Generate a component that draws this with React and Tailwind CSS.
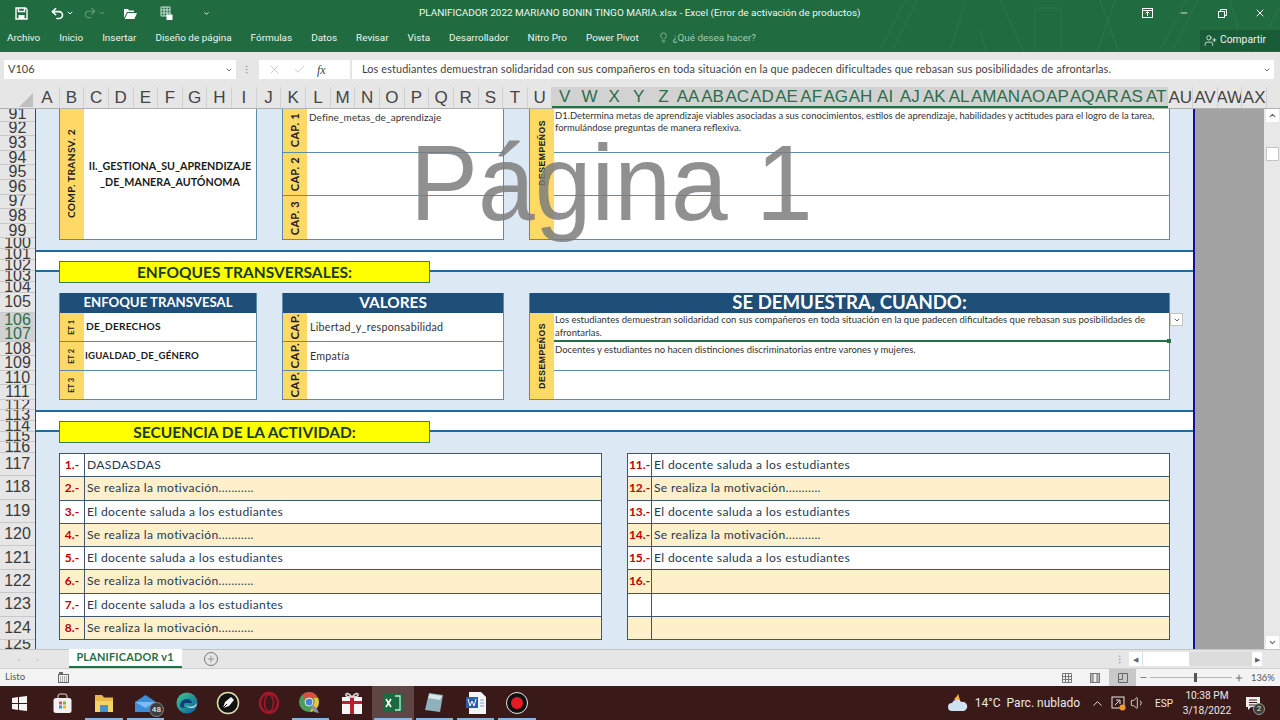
import { ChevronDown, ChevronUp, Lightbulb, UserPlus, Plus, Minus, X, Check, Undo2, Redo2, Volume1, MoreVertical } from 'lucide-react';

const ui = 'font-["Roboto",sans-serif]';
const cell = 'font-["Lato",sans-serif]';

const menu = ['Inicio', 'Insertar', 'Diseño de página', 'Fórmulas', 'Datos', 'Revisar', 'Vista', 'Desarrollador', 'Nitro Pro', 'Power Pivot'];

const columns = ['A','B','C','D','E','F','G','H','I','J','K','L','M','N','O','P','Q','R','S','T','U','V','W','X','Y','Z','AA','AB','AC','AD','AE','AF','AG','AH','AI','AJ','AK','AL','AM','AN','AO','AP','AQ','AR','AS','AT','AU','AV','AW','AX'];

const rowGroups = [
  { from: 91, to: 99, height: 'h-[14.6px]' },
  { from: 100, to: 104, height: 'h-[10.9px]' },
  { from: 105, to: 105, height: 'h-[20px]' },
  { from: 106, to: 111, height: 'h-[14.5px]' },
  { from: 112, to: 116, height: 'h-[10.6px]' },
  { from: 117, to: 124, height: 'h-[23.4px]' },
  { from: 125, to: 125, height: 'h-[10px]' },
];

const leftSteps = [
  ['1.-', 'DASDASDAS'],
  ['2.-', 'Se realiza la motivación...........'],
  ['3.-', 'El docente saluda a los estudiantes'],
  ['4.-', 'Se realiza la motivación...........'],
  ['5.-', 'El docente saluda a los estudiantes'],
  ['6.-', 'Se realiza la motivación...........'],
  ['7.-', 'El docente saluda a los estudiantes'],
  ['8.-', 'Se realiza la motivación...........'],
];

const rightSteps = [
  ['11.-', 'El docente saluda a los estudiantes'],
  ['12.-', 'Se realiza la motivación...........'],
  ['13.-', 'El docente saluda a los estudiantes'],
  ['14.-', 'Se realiza la motivación...........'],
  ['15.-', 'El docente saluda a los estudiantes'],
  ['16.-', ''],
  ['', ''],
  ['', ''],
];

const Vertical = ({ className, children }) => (
  <span className={`[writing-mode:vertical-rl] rotate-180 whitespace-nowrap ${className}`}>{children}</span>
);

const Tag = ({ children, className = '' }) => (
  <div className={`w-[24px] shrink-0 bg-[#ffd966] flex items-center justify-center overflow-hidden ${className}`}>{children}</div>
);

const SectionTitle = ({ title }) => (
  <div className="relative h-[43px] shrink-0">
    <div className="h-[22px] bg-white border-y-2 border-[#1f6a9a]" />
    <div className={`absolute left-[23px] top-[11px] w-[371px] h-[22px] bg-[#ffff00] border border-[#3d7a5e] flex items-center justify-center pt-[2px] text-[15.5px] font-bold text-[#1c3a2c] ${cell}`}>
      {title}
    </div>
  </div>
);

const StepTable = ({ steps, className, numWidth }) => (
  <div className={`border border-[#44546a] flex flex-col ${className}`}>
    {steps.map(([num, text], i) => (
      <div key={i} className={`flex-1 flex items-stretch ${i > 0 ? 'border-t border-[#44546a]' : ''} ${i % 2 ? 'bg-[#fdf0cb]' : 'bg-white'}`}>
        <div className={`${numWidth} shrink-0 border-r border-[#44546a] flex items-center justify-center text-[12px] font-bold text-[#c00000] ${cell}`}>{num}</div>
        <div className={`pl-[2px] flex items-center text-[12.1px] tracking-[0.35px] text-[#1f3a52] ${cell}`}>{text}</div>
      </div>
    ))}
  </div>
);

const SaveIcon = () => (
  <svg width="13" height="13" viewBox="0 0 13 13" fill="none" stroke="white" strokeWidth="1.4">
    <path d="M1 1h9.5L12 2.5V12H1z" />
    <path d="M3.5 1v3.5h6V1" />
    <rect x="3.5" y="8" width="6" height="4" fill="white" stroke="none" />
  </svg>
);

const FolderIcon = () => (
  <svg width="14" height="11" viewBox="0 0 14 11" fill="white">
    <path d="M1 1h4l1 1.5h5V4H4L1 10z" />
    <path d="M4.6 5H14l-2.6 6H1.8z" />
  </svg>
);

const LockGridIcon = () => (
  <svg width="13" height="15" viewBox="0 0 13 15" fill="none" stroke="#e8f0ea" strokeWidth="0.9">
    <path d="M1 1h9v9H1zM4 1v9M7 1v9M1 4h9M1 7h9" />
    <rect x="6.5" y="8.5" width="6" height="5.5" fill="white" stroke="none" />
  </svg>
);

const SketchLines = () => (
  <svg className="absolute right-0 top-0 pointer-events-none" width="420" height="52" viewBox="0 0 420 52" fill="none" stroke="#3a8058" strokeWidth="1" opacity="0.55">
    <path d="M20 50 45 0M32 50 57 0M90 50l16-50M120 30l6 22M140 0l24 52M175 50V8h26v42M240 0l18 50M255 0l-18 52M300 50l26-50M312 50l26-50M370 0l14 52M395 52 420 8" />
  </svg>
);

const TitleBar = () => (
  <div className={`relative h-[26px] shrink-0 flex items-center text-white ${ui}`}>
    <SketchLines />
    <div className="w-[410px] flex items-center">
      <span className="ml-[15px]"><SaveIcon /></span>
      <Undo2 className="ml-[22px]" size={15} strokeWidth={2.6} />
      <ChevronDown className="ml-[1px]" size={8} strokeWidth={3} />
      <Redo2 className="ml-[9px] text-[#5f9a78]" size={14} strokeWidth={2} />
      <ChevronDown className="ml-[1px] text-[#5f9a78]" size={8} strokeWidth={3} />
      <span className="ml-[17px]"><FolderIcon /></span>
      <span className="ml-[23px]"><LockGridIcon /></span>
      <ChevronDown className="ml-[30px]" size={7} strokeWidth={3} />
    </div>
    <span className="ml-[9px] text-[9.96px] whitespace-nowrap text-[#f2f7f4]">PLANIFICADOR 2022 MARIANO BONIN TINGO MARIA.xlsx - Excel (Error de activación de productos)</span>
    <div className="absolute right-0 top-0 h-[26px] flex items-center">
      <svg className="mr-[26px]" width="11" height="10" viewBox="0 0 11 10" fill="none" stroke="white"><rect x="0.5" y="0.5" width="10" height="9" /><path d="M0.5 2.5h10" /><path d="M5.5 8V4M3.5 5.5l2-2 2 2" /></svg>
      <Minus className="mr-[29px]" size={10} strokeWidth={2} />
      <svg className="mr-[27px]" width="9" height="9" viewBox="0 0 9 9" fill="none" stroke="white"><rect x="0.5" y="2.5" width="6" height="6" /><path d="M2.5 2.5v-2h6v6h-2" /></svg>
      <X className="mr-[14px]" size={12} strokeWidth={2} />
    </div>
  </div>
);

const MenuBar = () => (
  <div className={`relative h-[26px] shrink-0 flex items-center text-white text-[9.95px] ${ui}`}>
    <div className="flex items-center gap-[19px] ml-[7px] mb-[2px] whitespace-nowrap text-[#eef5f0]">
      <span>Archivo</span>
      {menu.map((m) => <span key={m}>{m}</span>)}
      <span className="flex items-center gap-[4px] text-[#a5c9b3]">
        <Lightbulb size={11} strokeWidth={1.6} />
        ¿Qué desea hacer?
      </span>
    </div>
    <div className="ml-auto mb-[-2px] h-[21px] w-[80px] bg-[#1a5c37] flex items-center gap-[3px] pl-[4px] text-[10.3px] text-[#eef5f0]">
      <UserPlus size={13} strokeWidth={1.5} />
      Compartir
    </div>
  </div>
);

const FormulaBar = () => (
  <div className={`h-[35px] shrink-0 bg-[#e6e6e6] flex items-center text-[10.4px] text-[#3f3f3f] ${cell}`}>
    <div className="ml-[4px] w-[232px] h-[19px] bg-white flex items-center justify-between pl-[4px] pr-[3px] text-[11px]">
      V106
      <ChevronDown size={8} strokeWidth={3} className="text-[#777]" />
    </div>
    <MoreVertical size={11} className="ml-[5px] text-[#a8a8a8]" />
    <div className="ml-[7px] w-[91px] h-[19px] bg-white flex items-center pl-[9px] text-[#b8b8b8]">
      <X size={13} strokeWidth={1.4} />
      <Check className="ml-[12px]" size={13} strokeWidth={1.4} />
      <span className={`ml-[11px] text-[#444] italic text-[12px] font-["Liberation_Serif",serif]`}>fx</span>
    </div>
    <div className="ml-[2px] w-[922px] h-[19px] bg-white flex items-center justify-between pl-[10px] pr-[3px] text-[10.87px] tracking-[0.12px]">
      <span className="whitespace-nowrap">Los estudiantes demuestran solidaridad con sus compañeros en toda situación en la que padecen dificultades que rebasan sus posibilidades de afrontarlas.</span>
      <ChevronDown size={8} strokeWidth={3} className="text-[#777]" />
    </div>
  </div>
);

const ColumnHeaders = () => (
  <div className="h-[22px] shrink-0 flex bg-[#e6e6e6] border-b border-[#b0b0b0] font-['Liberation_Sans',sans-serif] text-[17px] text-[#444]">
    <div className="relative w-[35px] shrink-0">
      <div className="absolute right-[2px] bottom-[1px] w-0 h-0 border-l-[14px] border-b-[14px] border-l-transparent border-b-[#c0c0c0]" />
    </div>
    {columns.map((c, i) => {
      const selected = i >= 21 && i <= 45;
      return (
        <div key={c} className={`w-[24.65px] shrink-0 flex items-center justify-center whitespace-nowrap overflow-hidden ${selected ? 'bg-[#d2d2d2] text-[#2a6e4a] border-b-2 border-[#217346]' : 'border-r border-[#d0d0d0]'}`}>
          {c}
        </div>
      );
    })}
  </div>
);

const RowHeaders = () => (
  <div className="w-[35px] shrink-0 overflow-hidden bg-[#e6e6e6] font-['Liberation_Sans',sans-serif] text-[16px] text-[#3a3a3a]">
    <div className="-mt-[2px]">
      {rowGroups.flatMap(({ from, to, height }) => {
        const rows = [];
        for (let n = from; n <= to; n++) {
          const selected = n === 106 || n === 107;
          rows.push(
            <div key={n} className={`${height} flex items-center justify-center overflow-hidden border-b border-[#c8c8c8] ${selected ? 'bg-[#d2d2d2] text-[#2a6e4a]' : ''}`}>
              <span className="leading-none">{n}</span>
            </div>
          );
        }
        return rows;
      })}
    </div>
  </div>
);

const Rows = ({ items, className = '' }) => (
  <div className={`flex-1 min-w-0 flex flex-col bg-white ${className}`}>
    {items.map((it, i) => (
      <div key={i} className={`flex-1 overflow-hidden ${i > 0 ? 'border-t border-[#5d8ca8]' : ''}`}>{it}</div>
    ))}
  </div>
);

const Sheet = () => (
  <div className="relative flex-1 flex min-h-0 overflow-hidden">
    <RowHeaders />
    <div className="w-[1160px] shrink-0 bg-[#dce9f5] border-l border-r-2 border-l-[#3a3aa8] border-r-[#10109a] flex flex-col overflow-hidden">
      {/* competencias */}
      <div className={`h-[131px] shrink-0 flex pl-[23px] text-[#1b1b1b] ${cell}`}>
        <div className="w-[198px] flex border-x border-b border-[#5d8ca8]">
          <Tag><Vertical className="text-[10.2px] font-bold tracking-[0.3px]">COMP. TRANSV. 2</Vertical></Tag>
          <div className="flex-1 bg-white flex items-center justify-center text-center text-[10.7px] leading-[16px] font-bold">
            <div>II._GESTIONA_SU_APRENDIZAJE<br />_DE_MANERA_AUTÓNOMA</div>
          </div>
        </div>
        <div className="ml-[25px] w-[222px] flex border-x border-b border-[#5d8ca8]">
          <div className="w-[24px] flex flex-col">
            {['CAP. 1', 'CAP. 2', 'CAP. 3'].map((c, i) => (
              <Tag key={c} className={`flex-1 w-full ${i > 0 ? 'border-t border-[#5d8ca8]' : ''}`}><Vertical className="text-[11px] font-bold tracking-[0.3px]">{c}</Vertical></Tag>
            ))}
          </div>
          <Rows items={[<div className="pl-[2px] pt-[1px] text-[9.95px] text-[#333] tracking-[0.1px]">Define_metas_de_aprendizaje</div>, null, null]} />
        </div>
        <div className="ml-[25px] w-[641px] flex border-x border-b border-[#5d8ca8]">
          <Tag className="items-start pt-[11px]"><Vertical className="font-['Liberation_Sans',sans-serif] text-[8.6px] font-bold tracking-[0.5px]">DESEMPEÑOS</Vertical></Tag>
          <Rows items={[
            <div className="pl-[1px] pt-[1px] text-[9.45px] leading-[12px] text-[#333]">D1.Determina metas de aprendizaje viables asociadas a sus conocimientos, estilos de aprendizaje, habilidades y actitudes para el logro de la tarea, formulándose preguntas de manera reflexiva.</div>,
            null,
            null,
          ]} />
        </div>
      </div>
      <div className="h-[10px] shrink-0" />
      <SectionTitle title="ENFOQUES TRANSVERSALES:" />
      {/* enfoques */}
      <div className={`h-[107px] shrink-0 flex pl-[23px] text-[#1b1b1b] ${cell}`}>
        <div className="w-[198px] flex flex-col border-x border-b border-[#5d8ca8]">
          <div className="h-[20px] shrink-0 bg-[#1f4e79] text-white font-bold text-[13.2px] flex items-center justify-center">ENFOQUE TRANSVESAL</div>
          <div className="flex-1 flex min-h-0">
            <div className="w-[24px] flex flex-col">
              {['ET 1', 'ET 2', 'ET 3'].map((c, i) => (
                <Tag key={c} className={`flex-1 w-full ${i > 0 ? 'border-t border-[#5d8ca8]' : ''}`}><Vertical className="text-[7.5px] font-bold">{c}</Vertical></Tag>
              ))}
            </div>
            <Rows items={[
              <div className="h-full flex items-center pl-[2px] text-[10.2px] font-bold tracking-[0.2px]">DE_DERECHOS</div>,
              <div className="h-full flex items-center pl-[1px] text-[9.6px] font-bold tracking-[0.2px]">IGUALDAD_DE_GÉNERO</div>,
              null,
            ]} />
          </div>
        </div>
        <div className="ml-[25px] w-[222px] flex flex-col border-x border-b border-[#5d8ca8]">
          <div className="h-[20px] shrink-0 bg-[#1f4e79] text-white font-bold text-[15.4px] flex items-center justify-center">VALORES</div>
          <div className="flex-1 flex min-h-0">
            <div className="w-[24px] flex flex-col">
              {[0, 1, 2].map((i) => (
                <Tag key={i} className={`flex-1 w-full ${i > 0 ? 'border-t border-[#5d8ca8]' : ''}`}><Vertical className="text-[11.5px] font-bold tracking-[0.3px]">CAP.</Vertical></Tag>
              ))}
            </div>
            <Rows items={[
              <div className="h-full flex items-center pl-[3px] text-[10.7px] text-[#333] tracking-[0.25px]">Libertad_y_responsabilidad</div>,
              <div className="h-full flex items-center pl-[3px] text-[10.7px] text-[#333] tracking-[0.25px]">Empatía</div>,
              null,
            ]} />
          </div>
        </div>
        <div className="relative ml-[25px] w-[641px] flex flex-col border-x border-b border-[#5d8ca8]">
          <div className="h-[20px] shrink-0 bg-[#1f4e79] text-white font-bold text-[18.6px] flex items-center justify-center overflow-hidden">SE DEMUESTRA, CUANDO:</div>
          <div className="flex-1 flex min-h-0">
            <Tag><Vertical className="font-['Liberation_Sans',sans-serif] text-[8.6px] font-bold tracking-[0.5px]">DESEMPEÑOS</Vertical></Tag>
            <Rows items={[
              <div className="pl-[1px] pt-[1px] h-full text-[9.5px] leading-[12.5px] text-[#333]">Los estudiantes demuestran solidaridad con sus compañeros en toda situación en la que padecen dificultades que rebasan sus posibilidades de afrontarlas.</div>,
              <div className="pl-[1px] pt-[2px] text-[9.5px] leading-[12.5px] text-[#333]">Docentes y estudiantes no hacen distinciones discriminatorias entre varones y mujeres.</div>,
              null,
            ]} />
          </div>
          {/* celda activa */}
          <div className="absolute left-[24px] right-[-1px] top-[47px] h-[2px] bg-[#217346]" />
          <div className="absolute right-[-2px] top-[46px] w-[4px] h-[4px] bg-[#217346]" />
          <div className="absolute right-[-14px] top-[20px] w-[13px] h-[13px] bg-white border border-[#c4c4c4] flex items-center justify-center text-[#666]">
            <ChevronDown size={8} strokeWidth={3} />
          </div>
        </div>
      </div>
      <div className="h-[10px] shrink-0" />
      <SectionTitle title="SECUENCIA DE LA ACTIVIDAD:" />
      {/* secuencia */}
      <div className="h-[187px] shrink-0 flex pl-[23px]">
        <StepTable steps={leftSteps} className="w-[543px]" numWidth="w-[25px]" />
        <StepTable steps={rightSteps} className="ml-[25px] w-[543px]" numWidth="w-[24px]" />
      </div>
    </div>
    <div className="w-[69px] shrink-0 bg-[#a3a3a3]" />
    <div className="relative flex-1 bg-[#e8e8e8] flex flex-col items-center justify-between">
      <div className="w-[13px] h-[13px] bg-white flex items-center justify-center text-[#666]"><ChevronUp size={9} strokeWidth={3} /></div>
      <div className="absolute left-[2px] top-[38px] w-[13px] h-[14px] bg-white border border-[#c4c4c4]" />
      <div className="w-[13px] h-[13px] bg-white flex items-center justify-center text-[#666]"><ChevronDown size={9} strokeWidth={3} /></div>
    </div>
    {/* marca de agua de la vista de pagina */}
    <div className="absolute left-[410px] top-[10px] scale-y-[1.05] font-['Liberation_Sans',sans-serif] text-[102px] leading-[128px] text-[#7d7d7d]/85 whitespace-nowrap pointer-events-none">Página 1</div>
  </div>
);

const TabBar = () => (
  <div className={`h-[19px] shrink-0 bg-[#e6e6e6] border-t border-[#c4c4c4] flex items-center text-[#aaa] ${cell}`}>
    <span className="ml-[18px] text-[8px]">‹</span>
    <span className="ml-[16px] text-[8px]">›</span>
    <div className="ml-[30px] w-[113px] h-[19px] -mt-[1px] bg-white border-b-2 border-[#217346] flex items-center justify-center text-[10.9px] font-bold text-[#2a6e4a] tracking-[0.2px]">PLANIFICADOR v1</div>
    <div className="ml-[22px] w-[14px] h-[14px] rounded-full border border-[#777] flex items-center justify-center text-[#666]"><Plus size={10} strokeWidth={1.5} /></div>
    <div className="ml-auto flex items-center mr-[18px] text-[#666]">
      <MoreVertical size={11} className="text-[#aaa] mr-[4px]" />
      <div className="w-[13px] h-[14px] bg-white flex items-center justify-center text-[7px]">◀</div>
      <div className="w-[47px] h-[14px] bg-white border-l border-[#ddd]" />
      <div className="w-[63px] h-[14px] bg-[#dcdcdc]" />
      <div className="w-[10px] h-[14px] bg-white flex items-center justify-center text-[7px]">▶</div>
    </div>
  </div>
);

const StatusBar = () => (
  <div className={`h-[18px] shrink-0 bg-[#f3f3f3] border-t border-[#d0d0d0] flex items-center text-[9.5px] text-[#555] ${cell}`}>
    <span className="ml-[5px]">Listo</span>
    <svg className="ml-[33px]" width="11" height="11" viewBox="0 0 11 11" fill="none" stroke="#666"><rect x="0.5" y="2.5" width="10" height="8" /><rect x="1" y="0" width="4" height="3" fill="#666" stroke="none" /><path d="M2 5h7M2 7h7M2 9h7" strokeDasharray="1 1" /></svg>
    <div className="ml-auto flex items-center h-full mr-[3px]">
      <svg width="10" height="10" viewBox="0 0 10 10" fill="none" stroke="#777"><path d="M.5.5h9v9h-9zM3.5.5v9M6.5.5v9M.5 3.5h9M.5 6.5h9" /></svg>
      <svg className="ml-[18px]" width="10" height="10" viewBox="0 0 10 10" fill="#bbb" stroke="#777"><rect x=".5" y=".5" width="9" height="9" /><rect x="3" y=".5" width="4" height="9" fill="#eee" /></svg>
      <div className="ml-[9px] w-[27px] h-full bg-[#c8c8c8] flex items-center justify-center">
        <svg width="10" height="10" viewBox="0 0 10 10" fill="none" stroke="#666"><path d="M.5.5h9v9h-9zM.5 6.5h4v-6" /></svg>
      </div>
      <Minus className="ml-[3px] text-[#555]" size={9} strokeWidth={2} />
      <div className="relative ml-[2px] w-[82px] h-px bg-[#b5b5b5]">
        <div className="absolute left-[44px] -top-[4px] w-[3px] h-[9px] bg-[#555]" />
      </div>
      <Plus className="ml-[2px] text-[#555]" size={10} strokeWidth={2} />
      <span className="ml-[7px] w-[26px] text-[9.3px]">136%</span>
    </div>
  </div>
);

const taskIcons = [
  <svg width="17" height="17" viewBox="0 0 17 17" fill="#f4f4f4"><path d="M1 3l6-1v6H1zM8 2l8-1v7H8zM1 9h6v6l-6-1zM8 9h8v7l-8-1z" /></svg>,
  <svg width="19" height="21" viewBox="0 0 19 21"><path d="M5 6V3a2 2 0 0 1 2-2h5a2 2 0 0 1 2 2v3" fill="none" stroke="#ddd" /><rect x="0.5" y="5" width="18" height="15" rx="2.5" fill="#f1f1f1" /><rect x="6" y="8.5" width="3" height="3" fill="#e8542b" /><rect x="10" y="8.5" width="3" height="3" fill="#7db928" /><rect x="6" y="12.5" width="3" height="3" fill="#1c9be0" /><rect x="10" y="12.5" width="3" height="3" fill="#fdb900" /></svg>,
  <svg width="20" height="19" viewBox="0 0 20 19"><path d="M1 1h7l2 2.5h9V18H1z" fill="#e9b949" /><path d="M1 7h18v11H1z" fill="#f6d365" /><rect x="6" y="11" width="8" height="7" fill="#4a90c8" /></svg>,
  <svg width="21" height="17" viewBox="0 0 21 17"><path d="M0 7 10.5 0 21 7v10H0z" fill="#3d8ed8" /><path d="M0 7l10.5 6L21 7" fill="#7bbcf0" /></svg>,
  <svg width="22" height="22" viewBox="0 0 22 22"><defs><linearGradient id="edgeA" x1="0" y1="0" x2="1" y2="1"><stop offset="0" stopColor="#3ecb8e" /><stop offset="1" stopColor="#0c59a4" /></linearGradient></defs><circle cx="11" cy="11" r="10.5" fill="url(#edgeA)" /><path d="M4 14c0-5 4-7 7-7s5 2 5 4h-6c-2 0-3 2-1 5-3 0-5-1-5-2z" fill="#0a3f7d" /><path d="M21 11c0 3-3 5-6 5-2 0-4-1-5-3 3 3 9 2 11-2z" fill="#c6f1d8" /></svg>,
  <svg width="24" height="24" viewBox="0 0 24 24"><circle cx="12" cy="12" r="10.5" fill="#111" stroke="#d9e3a8" strokeWidth="1.5" /><path d="M7 17l2-6 6-5 3 3-5 6z" fill="#f3f3f3" /><path d="M7 17l4-4" stroke="#111" /></svg>,
  <svg width="22" height="24" viewBox="0 0 22 24" fill="none" stroke="#a5172c"><ellipse cx="11" cy="12" rx="9" ry="10" strokeWidth="2.4" /><ellipse cx="11" cy="12" rx="4.5" ry="8.5" strokeWidth="1.6" /></svg>,
  <svg width="24" height="24" viewBox="0 0 24 24"><circle cx="11" cy="11" r="10" fill="#4a9d5b" /><path d="M11 1a10 10 0 0 1 9 6h-9a4 4 0 0 0-4 2L4 4a10 10 0 0 1 7-3z" fill="#d6503f" /><path d="M20 7a10 10 0 0 1-8 14l4-8a5 5 0 0 0-1-6z" fill="#efc33e" /><circle cx="11" cy="11" r="4" fill="#4a84d8" stroke="#eee" /><path d="M12 14l6 2 3 6-5-1z" fill="#8a9198" /></svg>,
  <svg width="20" height="22" viewBox="0 0 20 22"><rect x="0" y="5" width="20" height="17" fill="#f6f6f6" /><rect x="8" y="5" width="4" height="17" fill="#b8232f" /><rect x="0" y="9" width="20" height="3" fill="#b8232f" /><path d="M10 5C6 0 3 1 4 3.500 5 5 8 5 10 5zM10 5c4-5 7-4 6-1.500C15 5 12 5 10 5z" fill="none" stroke="#e3d8d8" strokeWidth="1.400" /></svg>,
  <svg width="20" height="18" viewBox="0 0 20 18"><rect x="0" y="0" width="20" height="18" rx="1" fill="#1a6b3f" /><path d="M3 5l5 8M8 5l-5 8" stroke="white" strokeWidth="1.600" /><path d="M12 2h5v14h-5" fill="none" stroke="#cfe6d8" strokeWidth="1.300" /></svg>,
  <svg width="20" height="22" viewBox="0 0 20 22"><path d="M5 1l14 2-3 17L1 18z" fill="#8fb0bd" /><path d="M6 2l12 2-2 4L4 6z" fill="#dbe7ea" /></svg>,
  <svg width="20" height="22" viewBox="0 0 20 22"><path d="M3 0h12l5 5v17H3z" fill="#f2f4f8" /><rect x="0" y="5" width="12" height="11" fill="#2a5fa8" /><path d="M2 7l2 7 2-5 2 5 2-7" fill="none" stroke="white" /><path d="M14 8h4M14 11h4M14 14h4" stroke="#7f9cc8" /></svg>,
  <svg width="22" height="22" viewBox="0 0 22 22"><circle cx="11" cy="11" r="10.500" fill="#111" stroke="#e8e8e8" strokeWidth="1" /><circle cx="11" cy="11" r="6" fill="#e61b23" /></svg>,
];

const Taskbar = () => (
  <div className={`relative h-[34px] shrink-0 bg-[#3a1a18] flex items-center text-[#ece8e6] ${ui}`}>
    <div className="flex h-full">
      {taskIcons.map((icon, i) => (
        <div key={i} className={`relative h-full flex items-center ${i === 0 ? 'w-[42px] pl-[11px]' : 'w-[41.3px] justify-center'} ${i === 9 ? 'bg-[#5f4543]' : ''}`}>
          {icon}
          {i === 3 && (
            <span className="absolute right-[2px] bottom-[3px] w-[15px] h-[15px] rounded-full bg-[#3d3d3d] border border-[#888] text-[8px] font-medium flex items-center justify-center">48</span>
          )}
          {[2, 3, 7, 9, 10, 11, 12].includes(i) && (
            <span className="absolute left-[2px] right-[2px] bottom-0 h-[2px] bg-[#8fb4d9]" />
          )}
        </div>
      ))}
    </div>
    <div className="ml-auto flex items-center h-full">
      <svg width="22" height="20" viewBox="0 0 22 20"><path d="M11 1 8 9l6 1z" fill="#f5b53a" /><path d="M7 6l5-5a7 7 0 0 0 1 9z" fill="#f5b53a" /><path d="M5 18a4 4 0 0 1 0-8 5 5 0 0 1 9-1 4.500 4.500 0 0 1 3 9z" fill="#cfe2f2" /></svg>
      <span className="ml-[6px] text-[12px] whitespace-nowrap">14°C</span>
      <span className="ml-[6px] text-[12px] whitespace-nowrap">Parc. nublado</span>
      <ChevronUp className="ml-[10px]" size={15} strokeWidth={1.5} />
      <svg className="ml-[6px]" width="15" height="15" viewBox="0 0 15 15" fill="none" stroke="#e5e5e5"><rect x="1" y="1" width="12" height="11" /><path d="M4 9l4-4M5 4h4v4" /><circle cx="11.500" cy="11.500" r="3" fill="#f09a2a" stroke="none" /></svg>
      <Volume1 className="ml-[4px]" size={16} strokeWidth={1.3} />
      <span className="ml-[9px] text-[10px]">ESP</span>
      <div className="ml-[11px] w-[46px] flex flex-col items-center text-[10.2px] leading-[15px]">
        <span>10:38 PM</span>
        <span>3/18/2022</span>
      </div>
      <div className="relative ml-[16px] mr-[20px]">
        <svg width="14" height="13" viewBox="0 0 14 13" fill="#eee"><path d="M0 0h14v10H5l-3 3v-3H0z" /><path d="M3 3h8M3 5.500h8M3 8h8" stroke="#3a1a18" /></svg>
        <span className="absolute -right-[5px] -bottom-[5px] w-[12px] h-[12px] rounded-full bg-[#3d3d3d] border border-[#999] text-[8px] flex items-center justify-center">2</span>
      </div>
    </div>
  </div>
);

export default function App() {
  return (
    <div className="w-[1280px] h-[720px] overflow-hidden flex flex-col bg-[#206b40]">
      <TitleBar />
      <MenuBar />
      <FormulaBar />
      <ColumnHeaders />
      <Sheet />
      <TabBar />
      <StatusBar />
      <Taskbar />
    </div>
  );
}
